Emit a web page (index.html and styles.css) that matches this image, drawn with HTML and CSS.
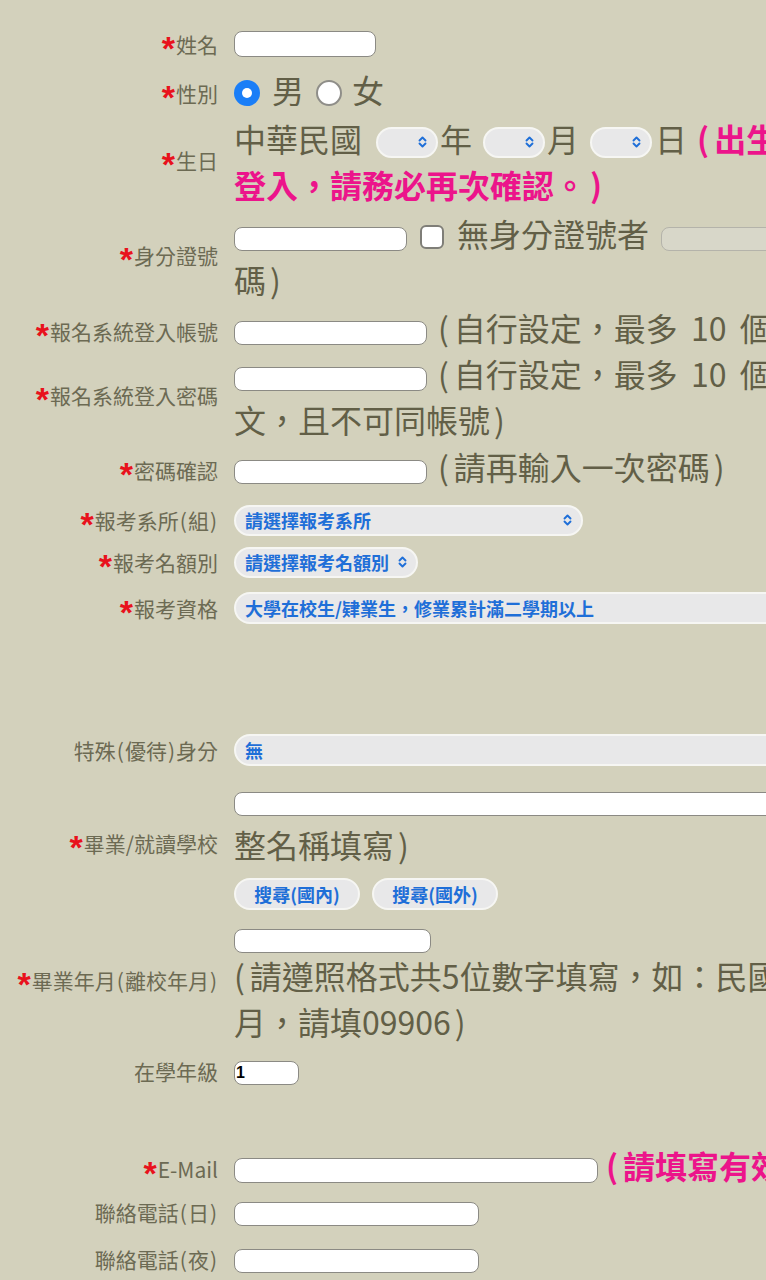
FILE: index.html
```html
<!DOCTYPE html>
<html lang="zh-Hant">
<head>
<meta charset="utf-8">
<title>報名資料</title>
<link rel="stylesheet" href="styles.css">
</head>
<body>
<div class="page">

  <div class="row">
    <div class="label"><span class="req">*</span>姓名</div>
    <div class="field">
      <div class="line"><input class="in w142" type="text"></div>
    </div>
  </div>

  <div class="row mt3">
    <div class="label"><span class="req">*</span>性別</div>
    <div class="field">
      <div class="line">
        <span class="radio on"></span><span class="t ml12">男</span>
        <span class="radio ml12"></span><span class="t ml10">女</span>
      </div>
    </div>
  </div>

  <div class="row mt3">
    <div class="label up"><span class="req">*</span>生日</div>
    <div class="field">
      <div class="line">
        <span class="t">中華民國</span>
        <span class="sel w62 ml14"><span class="sel-text"></span><svg class="chev" viewBox="0 0 10 14"><path d="M2 5.5L5 2.5L8 5.5M2 8.5L5 11.5L8 8.5"/></svg></span>
        <span class="t ml2">年</span>
        <span class="sel w62 ml11"><span class="sel-text"></span><svg class="chev" viewBox="0 0 10 14"><path d="M2 5.5L5 2.5L8 5.5M2 8.5L5 11.5L8 8.5"/></svg></span>
        <span class="t ml2">月</span>
        <span class="sel w62 ml11"><span class="sel-text"></span><svg class="chev" viewBox="0 0 10 14"><path d="M2 5.5L5 2.5L8 5.5M2 8.5L5 11.5L8 8.5"/></svg></span>
        <span class="t ml3">日</span>
        <span class="t pink ml10"><span class="po">(</span>出生年月日為報名系統</span>
      </div>
      <div class="line"><span class="t pink">登入，請務必再次確認。<span class="pc">)</span></span></div>
    </div>
  </div>

  <div class="row mt3">
    <div class="label up"><span class="req">*</span>身分證號</div>
    <div class="field">
      <div class="line">
        <input class="in w173" type="text">
        <span class="check ml13"></span>
        <span class="t ml13">無身分證號者</span>
        <input class="in off w200 ml12" type="text" disabled>
        <span class="t ml11"><span class="po">(</span>請填居留證號</span>
      </div>
      <div class="line"><span class="t">碼<span class="pc">)</span></span></div>
    </div>
  </div>

  <div class="row mt2">
    <div class="label"><span class="req">*</span>報名系統登入帳號</div>
    <div class="field">
      <div class="line">
        <input class="in w193" type="text">
        <span class="t ml11"><span class="po">(</span>自行設定，最多 10 個英數字<span class="pc">)</span></span>
      </div>
    </div>
  </div>

  <div class="row">
    <div class="label up"><span class="req">*</span>報名系統登入密碼</div>
    <div class="field">
      <div class="line">
        <input class="in w193" type="password">
        <span class="t ml11"><span class="po">(</span>自行設定，最多 10 個英數字，需含英</span>
      </div>
      <div class="line"><span class="t">文，且不可同帳號<span class="pc">)</span></span></div>
    </div>
  </div>

  <div class="row mt1">
    <div class="label"><span class="req">*</span>密碼確認</div>
    <div class="field">
      <div class="line">
        <input class="in w193" type="password">
        <span class="t ml11"><span class="po">(</span>請再輸入一次密碼<span class="pc">)</span></span>
      </div>
    </div>
  </div>

  <div class="row mt6">
    <div class="label"><span class="req">*</span>報考系所<span class="pa">(</span>組<span class="pa">)</span></div>
    <div class="field">
      <div class="line s">
        <span class="sel w349"><span class="sel-text">請選擇報考系所</span><svg class="chev" viewBox="0 0 10 14"><path d="M2 5.5L5 2.5L8 5.5M2 8.5L5 11.5L8 8.5"/></svg></span>
      </div>
    </div>
  </div>

  <div class="row">
    <div class="label"><span class="req">*</span>報考名額別</div>
    <div class="field">
      <div class="line s">
        <span class="sel w184"><span class="sel-text">請選擇報考名額別</span><svg class="chev" viewBox="0 0 10 14"><path d="M2 5.5L5 2.5L8 5.5M2 8.5L5 11.5L8 8.5"/></svg></span>
      </div>
    </div>
  </div>

  <div class="row mt4">
    <div class="label"><span class="req">*</span>報考資格</div>
    <div class="field">
      <div class="line s">
        <span class="sel wide"><span class="sel-text">大學在校生/肄業生，修業累計滿二學期以上</span></span>
      </div>
    </div>
  </div>

  <div class="row mt100">
    <div class="label">特殊<span class="pa">(</span>優待<span class="pa">)</span>身分</div>
    <div class="field">
      <div class="line s">
        <span class="sel wide"><span class="sel-text">無</span></span>
      </div>
    </div>
  </div>

  <div class="row mt8">
    <div class="label up"><span class="req">*</span>畢業/就讀學校</div>
    <div class="field">
      <div class="line"><input class="in wide" type="text"><span class="t ml11"><span class="po">(</span>請依學校完</span></div>
      <div class="line"><span class="t">整名稱填寫<span class="pc">)</span></span></div>
      <div class="line">
        <span class="btn">搜尋(國內)</span>
        <span class="btn ml12">搜尋(國外)</span>
      </div>
    </div>
  </div>

  <div class="row mt5">
    <div class="label up"><span class="req">*</span>畢業年月<span class="pa">(</span>離校年月<span class="pa">)</span></div>
    <div class="field">
      <div class="line h34"><input class="in w197" type="text"></div>
      <div class="line"><span class="t"><span class="po">(</span>請遵照格式共5位數字填寫，如：民國99年6</span></div>
      <div class="line"><span class="t">月，請填09906<span class="pc">)</span></span></div>
    </div>
  </div>

  <div class="row">
    <div class="label">在學年級</div>
    <div class="field">
      <div class="line"><input class="in w65 grade" type="text" value="1"></div>
    </div>
  </div>

  <div class="row mt55">
    <div class="label"><span class="req">*</span>E-Mail</div>
    <div class="field">
      <div class="line h40">
        <input class="in w364" type="text">
        <span class="t pink ml8"><span class="po">(</span>請填寫有效的E-Mail<span class="pc">)</span></span>
      </div>
    </div>
  </div>

  <div class="row mt3">
    <div class="label">聯絡電話<span class="pa">(</span>日<span class="pa">)</span></div>
    <div class="field">
      <div class="line h40"><input class="in w245" type="text"></div>
    </div>
  </div>

  <div class="row mt7">
    <div class="label">聯絡電話<span class="pa">(</span>夜<span class="pa">)</span></div>
    <div class="field">
      <div class="line h40"><input class="in w245" type="text"></div>
    </div>
  </div>

</div>
</body>
</html>
```

FILE: styles.css
```css
html, body {
  margin: 0;
  padding: 0;
  background: #d3d1bc;
}

.page {
  width: 766px;
  height: 1280px;
  overflow: hidden;
  box-sizing: border-box;
  padding-top: 21px;
  background: #d3d1bc;
  font-family: "Noto Sans CJK TC", "Noto Sans", sans-serif;
  color: #625f47;
}

.row {
  display: flex;
}

.label {
  flex: none;
  width: 218px;
  text-align: right;
  align-self: center;
  font-size: 21px;
  line-height: 30px;
  color: #6c6a53;
  white-space: nowrap;
}

.label.up {
  margin-bottom: 10px;
}

.label .pa {
  padding: 0 1px;
}

.req {
  color: #e8121c;
  font-family: "Liberation Sans", sans-serif;
  font-weight: bold;
  font-size: 34px;
  line-height: 0;
  vertical-align: -7px;
  margin-right: 1px;
}

.field {
  margin-left: 16px;
  display: flex;
  flex-direction: column;
  white-space: nowrap;
}

.line {
  display: flex;
  align-items: center;
  height: 46px;
}

.line.s { height: 42px; }
.line.h34 { height: 34px; }
.line.h40 { height: 40px; }

.t {
  font-size: 32px;
  line-height: 46px;
  margin-bottom: 8px;
  word-spacing: 6px;
  flex: none;
}

.t .po { margin-right: 5px; }
.t .pc { margin-left: 4px; }

.pink {
  color: #ec148b;
  font-weight: bold;
}

/* text inputs */
.in {
  flex: none;
  box-sizing: border-box;
  height: 24px;
  margin: 3px 0 0 0;
  padding: 0 3px;
  border: 1.5px solid #8b8a84;
  border-radius: 8px;
  background: #ffffff;
  font-family: "Noto Sans CJK TC", sans-serif;
  font-size: 17px;
  color: #000;
  outline: none;
}

.in.off {
  background: #d8d7c9;
  border-color: #b4b3aa;
}

.in.grade {
  padding-left: 1px;
  font-family: "Liberation Sans", sans-serif;
  font-weight: bold;
  font-size: 16px;
}

.w62 { width: 62px; }
.w65 { width: 65px; }
.w142 { width: 142px; height: 26px; margin-top: 0; }
.w173 { width: 173px; }
.w184 { width: 184px; }
.w193 { width: 193px; }
.w197 { width: 197px; }
.w200 { width: 200px; }
.w245 { width: 245px; }
.w349 { width: 349px; }
.w364 { width: 364px; height: 25px; }
.wide { width: 620px; }

/* radios and checkbox */
.radio {
  flex: none;
  box-sizing: border-box;
  width: 26px;
  height: 26px;
  border-radius: 50%;
  border: 2px solid #8f8e89;
  background: #ffffff;
  display: flex;
  align-items: center;
  justify-content: center;
}

.radio.on {
  border: none;
  background: #1a7ef7;
}

.radio.on::after {
  content: "";
  width: 10px;
  height: 10px;
  border-radius: 50%;
  background: #ffffff;
}

.check {
  flex: none;
  box-sizing: border-box;
  width: 24px;
  height: 24px;
  border-radius: 6px;
  border: 2px solid #7f7e78;
  background: #ffffff;
}

/* select-like pills */
.sel {
  flex: none;
  box-sizing: border-box;
  height: 31px;
  border: 2px solid #f6f6f3;
  border-radius: 16px;
  background: #e8e8e9;
  display: flex;
  align-items: center;
  justify-content: space-between;
  padding: 0 8px 0 9px;
  color: #1f6fd8;
  font-weight: bold;
  font-size: 18px;
}

.sel.wide {
  height: 32px;
  justify-content: flex-start;
}

.sel-text {
  line-height: 24px;
}

.chev {
  flex: none;
  width: 11px;
  height: 14px;
  fill: none;
  stroke: #1f6fd8;
  stroke-width: 1.9;
  stroke-linecap: round;
  stroke-linejoin: round;
}

.btn {
  flex: none;
  box-sizing: border-box;
  width: 126px;
  height: 32px;
  border: 2px solid #f6f6f3;
  border-radius: 16px;
  background: #e8e8e9;
  display: flex;
  align-items: center;
  justify-content: center;
  color: #1f6fd8;
  font-weight: bold;
  font-size: 18px;
}

/* spacing helpers */
.ml2 { margin-left: 2px; }
.ml3 { margin-left: 3px; }
.ml8 { margin-left: 8px; }
.ml10 { margin-left: 10px; }
.ml11 { margin-left: 11px; }
.ml12 { margin-left: 12px; }
.ml13 { margin-left: 13px; }
.ml14 { margin-left: 14px; }

.mt1 { margin-top: 1px; }
.mt2 { margin-top: 2px; }
.mt3 { margin-top: 3px; }
.mt4 { margin-top: 4px; }
.mt5 { margin-top: 5px; }
.mt6 { margin-top: 6px; }
.mt7 { margin-top: 7px; }
.mt8 { margin-top: 8px; }
.mt55 { margin-top: 55px; }
.mt100 { margin-top: 100px; }
```
